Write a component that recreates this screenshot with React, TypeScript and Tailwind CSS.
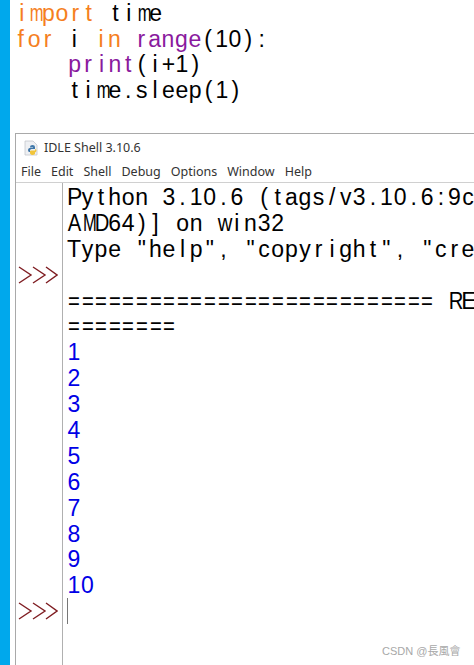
const Cells = ({ text, w, className = "" }: { text: string; w: number; className?: string }) => (
  <span className={className}>
    {Array.from(text).map((c, i) => {
      const squeeze =
        c === "m" || c === "M" ? "scale-x-[0.72]" : c === "w" || c === "A" || c === "D" || c === "R" || c === "=" ? "scale-x-[0.88]" : "";
      return (
        <span key={i} className={`inline-block text-center overflow-visible ${squeeze}`} style={{ width: w }}>
          {c === " " ? "\u00a0" : c}
        </span>
      );
    })}
  </span>
);

const Code = ({ children, pad = "" }: { children: React.ReactNode; pad?: string }) => (
  <div className={`h-[25.7px] leading-[26px] whitespace-nowrap ${pad}`}>{children}</div>
);

const Line = ({ text, color = "text-black" }: { text: string; color?: string }) => (
  <div className={`h-[25.9px] leading-[26px] whitespace-nowrap ${color}`}>
    <Cells text={text} w={13.6} />
  </div>
);

const Prompt = () => (
  <div className="h-[25.9px] flex items-center justify-end pr-[4px]">
    <svg width="40" height="18" viewBox="0 0 40 18" fill="none" stroke="#7f1d22" strokeWidth="1.4">
      <path d="M1 1l12 8-12 8M15 1l12 8-12 8M28 1l11 8-11 8" />
    </svg>
  </div>
);

const W = 13.4;
const O = "text-[#f57f1e]";
const P = "text-[#8a1a9e]";

export default function App() {
  return (
    <div className="w-[474px] h-[665px] overflow-hidden bg-white flex font-['Liberation_Sans',sans-serif] text-black">
      <div className="w-[10px] shrink-0 bg-[#00a8ec]" />
      <div className="flex-1 min-w-0 flex flex-col bg-white">
        <div className="h-[133px] shrink-0 pl-[4px] text-[23px]">
          <Code><span className="ml-[1px]" /><Cells text="import" w={W} className={O} /><Cells text=" time" w={W} /></Code>
          <Code><Cells text="for" w={W} className={O} /><Cells text=" i " w={W} /><Cells text="in" w={W} className={O} /><Cells text=" " w={W} /><Cells text="range" w={W} className={P} /><Cells text="(10):" w={W} /></Code>
          <Code pad="pl-[54px]"><Cells text="print" w={W} className={P} /><Cells text="(i+1)" w={W} /></Code>
          <Code pad="pl-[54px]"><Cells text="time.sleep(1)" w={W} /></Code>
        </div>
        <div className="flex-1 min-h-0 ml-[5px] border-t border-l border-[#a9a9a9] flex flex-col bg-white">
          <div className="h-[31px] shrink-0 flex items-center pl-[8px] gap-[4px] pb-[3px] text-[12.5px] text-[#333] font-['Noto_Sans',sans-serif]">
            <svg width="16" height="16" viewBox="0 0 16 16">
              <path d="M1 1h8l4 4v10H1z" fill="#eef0f3" stroke="#c4c7cc" strokeWidth="0.8" />
              <path d="M6 7q0-2 2.500-2t2.500 2v2H7.500q-1.500 0-1.500 1.500V12H5q-1-.5-1-2t1.500-2H9V7.500H6z" fill="#3f77a8" />
              <path d="M11 9q1.500 0 1.500 1.500t-1.500 2V14q-1 1-2.500 1T6 13.500V11q0-.5 1.500-.5H11z" fill="#f2c53a" />
            </svg>
            <span>IDLE Shell 3.10.6</span>
          </div>
          <div className="h-[17px] shrink-0 flex items-center pl-[5px] gap-[10px] pb-[2px] text-[12.5px] text-[#333] font-['Noto_Sans',sans-serif]">
            <span>File</span><span>Edit</span><span>Shell</span><span>Debug</span><span>Options</span><span>Window</span><span>Help</span>
          </div>
          <div className="flex-1 min-h-0 flex border-t border-[#d0d0d0] text-[23px]">
            <div className="w-[47px] shrink-0 border-r border-[#b0b0b0] pt-[1px]">
              <div className="h-[77.7px]" />
              <Prompt />
              <div className="h-[310.8px]" />
              <Prompt />
            </div>
            <div className="flex-1 min-w-0 pl-[4px] pt-[1px] overflow-hidden">
              <Line text="Python 3.10.6 (tags/v3.10.6:9c" />
              <Line text="AMD64)] on win32" />
              <Line text={'Type "help", "copyright", "cre'} />
              <Line text=" " />
              <Line text="=========================== RE" />
              <Line text="========" />
              {[1, 2, 3, 4, 5, 6, 7, 8, 9, 10].map((n) => (
                <Line key={n} text={String(n)} color="text-[#0000e6]" />
              ))}
              <div className="h-[25.9px] flex items-center">
                <div className="w-px h-[26px] bg-[#777]" />
              </div>
            </div>
          </div>
        </div>
      </div>
      <div className="absolute left-[382px] top-[643px] text-[11px] text-[#a8a8a8] font-['Liberation_Sans','Noto_Sans_CJK_TC',sans-serif]">
        CSDN @長風會
      </div>
    </div>
  );
}
